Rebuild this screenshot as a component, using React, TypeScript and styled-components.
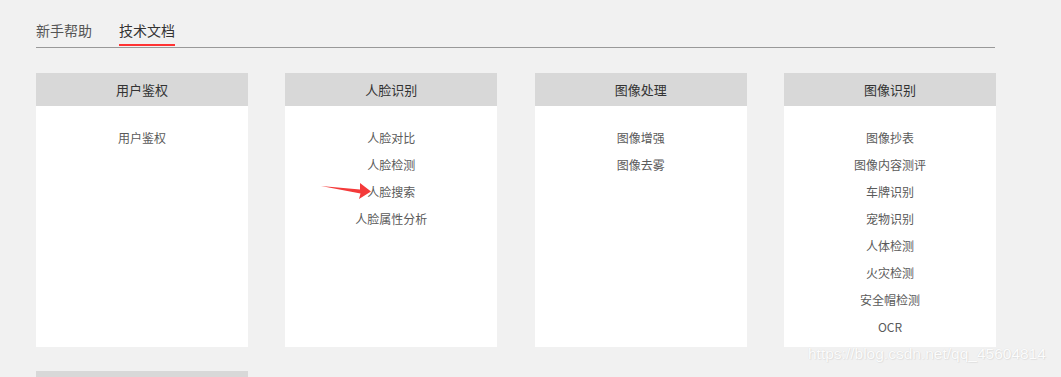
import React from 'react';
import styled, { createGlobalStyle } from 'styled-components';

const GlobalStyle = createGlobalStyle`
  html, body {
    margin: 0;
    padding: 0;
    background: #f1f1f1;
    font-family: "Microsoft YaHei", "Noto Sans CJK SC", "Noto Sans", sans-serif;
  }
`;

const Page = styled.div`
  position: relative;
  width: 1061px;
  height: 377px;
  overflow: hidden;
  padding: 18px 0 0 36px;
  box-sizing: border-box;
`;

const Tabs = styled.div`
  display: flex;
  gap: 27px;
  width: 959px;
  border-bottom: 1px solid #999;
`;

const Tab = styled.div<{ $active?: boolean }>`
  font-size: 14px;
  line-height: 24px;
  padding-bottom: 2px;
  color: ${(p) => (p.$active ? '#333' : '#555')};
  border-bottom: 2px solid ${(p) => (p.$active ? '#f33' : 'transparent')};
  margin-bottom: 1px;
`;

const Grid = styled.div`
  display: grid;
  grid-template-columns: repeat(4, 212px);
  justify-content: space-between;
  row-gap: 24px;
  width: 960px;
  margin-top: 25px;
`;

const Card = styled.div`
  background: #fff;
  display: flex;
  flex-direction: column;
  min-height: 274px;
`;

const CardHead = styled.div`
  height: 33px;
  background: #d8d8d8;
  color: #333;
  font-size: 13px;
  display: flex;
  align-items: center;
  justify-content: center;
`;

const CardBody = styled.ul`
  list-style: none;
  margin: 0;
  padding: 18px 0 6px;
`;

const Item = styled.li`
  font-size: 12px;
  line-height: 27px;
  color: #5a5a5a;
  text-align: center;
`;

const Arrow = styled.svg`
  position: absolute;
  left: 320px;
  top: 180px;
`;

const Watermark = styled.div`
  position: absolute;
  left: 808px;
  top: 345px;
  font-family: Arial, "Liberation Sans", sans-serif;
  font-size: 15.5px;
  color: rgba(255, 255, 255, 0.95);
  text-shadow: 0 0 1px rgba(0, 0, 0, 0.12), 1px 1px 1px rgba(0, 0, 0, 0.06);
`;

const sections: { title: string; items: string[] }[] = [
  { title: '用户鉴权', items: ['用户鉴权'] },
  { title: '人脸识别', items: ['人脸对比', '人脸检测', '人脸搜索', '人脸属性分析'] },
  { title: '图像处理', items: ['图像增强', '图像去雾'] },
  {
    title: '图像识别',
    items: ['图像抄表', '图像内容测评', '车牌识别', '宠物识别', '人体检测', '火灾检测', '安全帽检测', 'OCR'],
  },
  { title: '', items: [] },
];

function App(): JSX.Element {
  return (
    <>
      <GlobalStyle />
      <Page>
        <Tabs>
          <Tab>新手帮助</Tab>
          <Tab $active>技术文档</Tab>
        </Tabs>
        <Grid>
          {sections.map((s, i) => (
            <Card key={i}>
              <CardHead>{s.title}</CardHead>
              <CardBody>
                {s.items.map((it) => (
                  <Item key={it}>{it}</Item>
                ))}
              </CardBody>
            </Card>
          ))}
        </Grid>
        <Arrow width="54" height="22" viewBox="0 0 54 22">
          <path d="M1 6 L40 9.5 L40 3 L51 11.5 L39 19 L40.5 13.5 Z" fill="#f43a3a" />
        </Arrow>
        <Watermark>https://blog.csdn.net/qq_45604814</Watermark>
      </Page>
    </>
  );
}

export default App;
